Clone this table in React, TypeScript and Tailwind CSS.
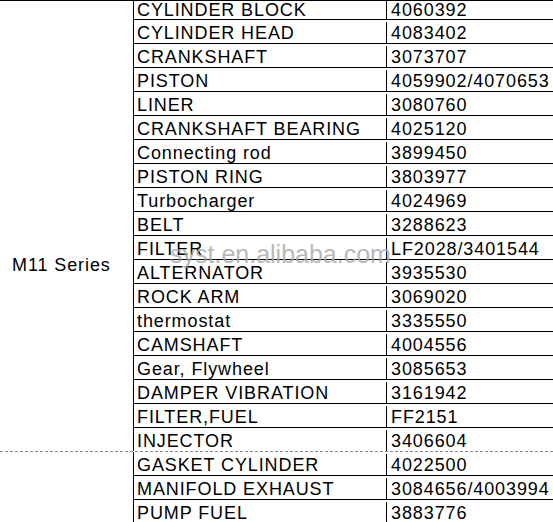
import React from 'react';

const parts: [string, string][] = [
  ['CYLINDER BLOCK', '4060392'],
  ['CYLINDER HEAD', '4083402'],
  ['CRANKSHAFT', '3073707'],
  ['PISTON', '4059902/4070653'],
  ['LINER', '3080760'],
  ['CRANKSHAFT BEARING', '4025120'],
  ['Connecting rod', '3899450'],
  ['PISTON RING', '3803977'],
  ['Turbocharger', '4024969'],
  ['BELT', '3288623'],
  ['FILTER', 'LF2028/3401544'],
  ['ALTERNATOR', '3935530'],
  ['ROCK ARM', '3069020'],
  ['thermostat', '3335550'],
  ['CAMSHAFT', '4004556'],
  ['Gear, Flywheel', '3085653'],
  ['DAMPER VIBRATION', '3161942'],
  ['FILTER,FUEL', 'FF2151'],
  ['INJECTOR', '3406604'],
  ['GASKET CYLINDER', '4022500'],
  ['MANIFOLD EXHAUST', '3084656/4003994'],
  ['PUMP FUEL', '3883776'],
];

const App = () => {
  return (
    <div className="relative w-[553px] h-[522px] overflow-hidden bg-white text-black font-['Liberation_Sans',Arial,sans-serif] text-[18px] tracking-[0.9px]">
      <div className="flex w-[580px] h-[540px] border-t border-black">
        {/* merged series cell */}
        <div className="w-[133px] shrink-0 h-[527px] flex items-center pl-[12px] pt-[2px]">
          M11 Series
        </div>

        <div className="flex-1 border-l border-black">
          {parts.map(([name, no], i) => (
            <div
              key={name}
              className={`flex border-b border-black ${i === 0 ? 'h-[19px] items-end' : 'h-[24px] items-center pt-[2px]'}`}
            >
              <div className="w-[252px] shrink-0 pl-[3px] leading-none whitespace-nowrap">{name}</div>
              <div className="flex-1 self-stretch flex items-center border-l border-black pl-[4px] leading-none whitespace-nowrap">
                {no}
              </div>
            </div>
          ))}
        </div>
      </div>

      {/* page break line */}
      <div className="absolute left-0 right-0 top-[451px] h-px border-t border-dashed border-[#8a8a8a] bg-white" />

      {/* watermark */}
      <div
        className="absolute left-[170px] top-[242px] leading-none whitespace-nowrap pointer-events-none text-[#a8a8a8] opacity-80"
        style={{ fontSize: 25, letterSpacing: 0 }}
      >
        syst.en.alibaba.com
      </div>
    </div>
  );
};

export default App;
